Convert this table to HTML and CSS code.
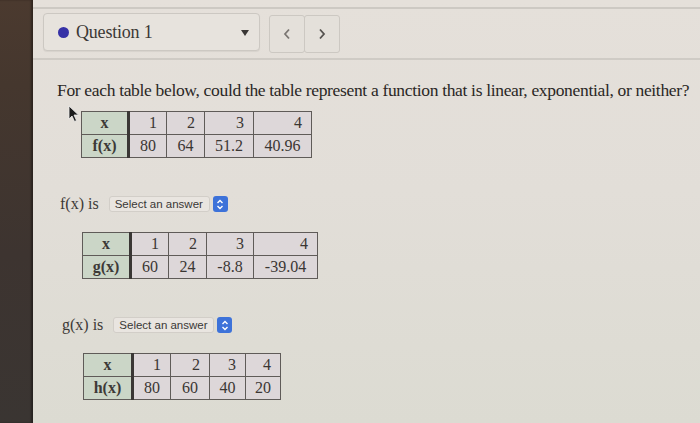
FILE: index.html
```html
<!DOCTYPE html>
<html>
<head>
<meta charset="utf-8">
<link rel="stylesheet" href="styles.css">
</head>
<body>
<div class="page">
  <div class="edge"></div>
  <div class="main">
    <div class="topbar">
      <div class="qbox">
        <span class="dot"></span>
        <span class="qlabel">Question 1</span>
        <span class="caret"></span>
      </div>
      <div class="nav">
        <div class="navbtn">
          <svg width="10" height="12" viewBox="0 0 10 12"><path d="M7 1.5 L3 6 L7 10.5" fill="none" stroke="#7a7672" stroke-width="1.8"/></svg>
        </div>
        <div class="navbtn">
          <svg width="10" height="12" viewBox="0 0 10 12"><path d="M3 1.5 L7 6 L3 10.5" fill="none" stroke="#55524f" stroke-width="1.8"/></svg>
        </div>
      </div>
    </div>

    <div class="content">
      <p class="prompt">For each table below, could the table represent a function that is linear, exponential, or neither?</p>

      <div class="tblwrap t1">
        <svg class="cursor" width="12" height="18" viewBox="0 0 12 18"><path d="M1 1 L1 14 L4 11 L6.5 16.5 L8.5 15.5 L6 10 L10.5 10 Z" fill="#1c1c1c" stroke="#eee" stroke-width="0.8"/></svg>
        <table class="ft">
          <colgroup><col style="width:47px"><col style="width:38px"><col style="width:38px"><col style="width:49px"><col style="width:58px"></colgroup>
          <tr><td class="h">x</td><td class="r">1</td><td class="r">2</td><td class="r">3</td><td class="r">4</td></tr>
          <tr><td class="h">f(x)</td><td>80</td><td>64</td><td>51.2</td><td>40.96</td></tr>
        </table>
      </div>

      <div class="answer a1">
        <span class="lbl">f(x) is</span>
        <span class="sel">Select an answer</span>
        <span class="step"><svg width="8" height="11" viewBox="0 0 8 11"><path d="M1.5 4 L4 1.5 L6.5 4 M1.5 7 L4 9.5 L6.5 7" fill="none" stroke="#fff" stroke-width="1.4"/></svg></span>
      </div>

      <div class="tblwrap t2">
        <table class="ft">
          <colgroup><col style="width:48px"><col style="width:38px"><col style="width:38px"><col style="width:47px"><col style="width:64px"></colgroup>
          <tr><td class="h">x</td><td class="r">1</td><td class="r">2</td><td class="r">3</td><td class="r">4</td></tr>
          <tr><td class="h">g(x)</td><td>60</td><td>24</td><td>-8.8</td><td>-39.04</td></tr>
        </table>
      </div>

      <div class="answer a2">
        <span class="lbl">g(x) is</span>
        <span class="sel">Select an answer</span>
        <span class="step"><svg width="8" height="11" viewBox="0 0 8 11"><path d="M1.5 4 L4 1.5 L6.5 4 M1.5 7 L4 9.5 L6.5 7" fill="none" stroke="#fff" stroke-width="1.4"/></svg></span>
      </div>

      <div class="tblwrap t3">
        <table class="ft">
          <colgroup><col style="width:49px"><col style="width:38px"><col style="width:39px"><col style="width:36px"><col style="width:35px"></colgroup>
          <tr><td class="h">x</td><td class="r">1</td><td class="r">2</td><td class="r">3</td><td class="r">4</td></tr>
          <tr><td class="h">h(x)</td><td>80</td><td>60</td><td>40</td><td>20</td></tr>
        </table>
      </div>
    </div>
  </div>
</div>
</body>
</html>
```

FILE: styles.css
```css
html, body {
  margin: 0;
  padding: 0;
}
body {
  width: 700px;
  height: 423px;
  overflow: hidden;
  font-family: "Liberation Serif", "DejaVu Serif", serif;
  color: #2f2c2a;
}
.page {
  display: flex;
  height: 423px;
}
.edge {
  width: 33px;
  flex: none;
  background: linear-gradient(180deg, #4b3a2f 0%, #45372e 20%, #3d3430 60%, #3a3532 100%);
  box-shadow: inset -2px 0 2px rgba(0,0,0,0.35);
}
.main {
  flex: 1;
  background: linear-gradient(180deg, #e5e0da 0%, #e2ded8 45%, #dcdbd2 100%);
}
.topbar {
  margin-top: 7px;
  border-top: 2px solid #cdc9c3;
  border-bottom: 2px solid #cfcbc5;
  padding: 4px 0 5px 10px;
  display: flex;
  align-items: flex-start;
  gap: 9px;
}
.qbox {
  width: 201px;
  height: 36px;
  border: 1px solid #ccc8c2;
  border-radius: 4px;
  background: #e7e3dd;
  display: flex;
  align-items: center;
  padding-left: 14px;
  box-shadow: 0 1px 1px rgba(0,0,0,0.06);
}
.dot {
  width: 11px;
  height: 11px;
  border-radius: 50%;
  background: #3631a6;
  margin-right: 7px;
}
.qlabel {
  font-size: 18px;
  color: #3b3835;
  flex: 1;
  letter-spacing: -0.2px;
}
.caret {
  width: 0;
  height: 0;
  border-left: 4px solid transparent;
  border-right: 4px solid transparent;
  border-top: 6px solid #3a3735;
  margin-right: 10px;
  margin-top: 2px;
}
.nav {
  display: flex;
  margin-top: 2px;
}
.navbtn {
  width: 34px;
  height: 36px;
  border: 1px solid #ccc8c2;
  border-radius: 3px;
  background: #e4e0da;
  display: flex;
  align-items: center;
  justify-content: center;
}
.navbtn + .navbtn {
  margin-left: -1px;
}
.content {
  padding-left: 24px;
}
.prompt {
  margin: 20px 0 0 0;
  font-size: 17.5px;
  line-height: 21px;
  letter-spacing: -0.33px;
  white-space: nowrap;
  color: #2a2725;
}
.tblwrap {
  position: relative;
}
.t1 { margin: 10px 0 0 24px; }
.t2 { margin: 19px 0 0 25px; }
.t3 { margin: 19px 0 0 26px; }
.cursor {
  position: absolute;
  left: -13px;
  top: -6px;
}
.ft {
  border-collapse: collapse;
  table-layout: fixed;
  font-size: 16px;
  color: #3a3633;
}
.ft td {
  border: 1px solid #5f5b58;
  height: 22px;
  padding: 0 4px;
  text-align: center;
  background: #ddd7d9;
  line-height: 20px;
}
.ft td.r {
  text-align: right;
  padding-right: 9px;
}
.ft td.h {
  background: #cbd6c7;
  font-weight: bold;
  border-right: 3px solid #3a3735;
  color: #3d3a37;
}
.answer {
  display: flex;
  align-items: center;
  font-size: 16px;
}
.a1 { margin: 37px 0 0 3px; }
.a2 { margin: 37px 0 0 5px; }
.lbl {
  margin-right: 10px;
  color: #3c3936;
}
.sel {
  box-sizing: border-box;
  width: 101px;
  font-family: "Liberation Sans", Arial, sans-serif;
  font-size: 11.5px;
  white-space: nowrap;
  color: #3a3836;
  background: #e9e5e0;
  border: 1px solid #d2cec8;
  border-radius: 3px;
  height: 16px;
  line-height: 14px;
  padding: 0 0 0 5px;
}
.step {
  width: 15px;
  height: 16px;
  background: #3d72d9;
  border-radius: 3px;
  margin-left: 3px;
  display: flex;
  align-items: center;
  justify-content: center;
}
```
